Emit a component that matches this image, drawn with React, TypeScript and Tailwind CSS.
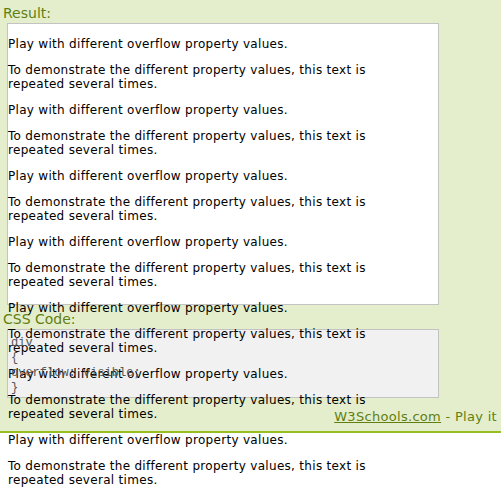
const paragraphs = Array.from({ length: 7 });

export default function App() {
  return (
    <div className="min-h-screen bg-white text-[12px] leading-[14px] tracking-[0.3px] text-black" style={{ fontFamily: '"DejaVu Sans", Verdana, sans-serif' }}>
      <div className="h-[433px] bg-[#e5eecc] border-b-2 border-[#98bf21]">
        <div className="h-[23px] px-[3px] pt-[4px] text-[14px] leading-[18px] tracking-normal text-[#617f10]">Result:</div>
        <div className="ml-[7px] w-[432px] h-[282px] bg-white border border-[#c3c3c3] pt-[1px]">
          {paragraphs.map((_, i) => (
            <div key={i} className="pr-[20px]">
              <p className="my-[12px]">Play with different overflow property values.</p>
              <p className="my-[12px]">
                To demonstrate the different property values, this text is repeated several times.
              </p>
            </div>
          ))}
        </div>
        <div className="h-[24px] px-[3px] pt-[5px] text-[14px] leading-[18px] tracking-normal text-[#617f10]">CSS Code:</div>
        <pre
          className="ml-[7px] w-[432px] h-[69px] bg-[#f1f1f1] border border-[#c3c3c3] px-[3px] pt-[6px] text-[12px] leading-[15px] tracking-normal text-[#555]"
          style={{ fontFamily: '"Liberation Mono", "Courier New", monospace' }}
        >
          {"div\n{\noverflow: visible;\n}"}
        </pre>
        <div className="pt-[11px] pr-[4px] text-right text-[13px] leading-[16px] text-[#617f10]">
          <a href="#" className="underline text-[#617f10]">W3Schools.com</a>
          <span> - Play it</span>
        </div>
      </div>
    </div>
  );
}
